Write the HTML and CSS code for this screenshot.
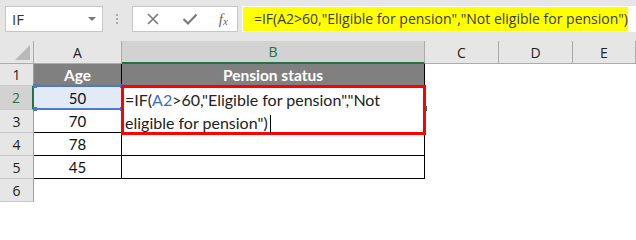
FILE: index.html
```html
<!DOCTYPE html>
<html>
<head>
<meta charset="utf-8">
<link rel="stylesheet" href="styles.css">
</head>
<body>
<div class="topbar">
  <div class="namebox"><span class="name">IF</span><span class="caret"></span></div>
  <div class="grip"><i></i><i></i><i></i></div>
  <div class="fbtns">
    <svg class="ico" width="14" height="14" viewBox="0 0 14 14"><path d="M2 2 L12 12 M12 2 L2 12" stroke="#7a7a7a" stroke-width="1.6" fill="none"/></svg>
    <svg class="ico" width="16" height="14" viewBox="0 0 16 14"><path d="M1.5 7 L6 11.5 L14.5 2.5" stroke="#7a7a7a" stroke-width="2.2" fill="none"/></svg>
    <span class="fx">f<sub>x</sub></span>
  </div>
  <div class="finput"><span class="hl">=IF(A2&gt;60,"Eligible for pension","Not eligible for pension")</span></div>
</div>
<div class="sheet">
  <div class="corner"><span class="tri"></span></div>
  <div class="ch">A</div>
  <div class="ch sel">B</div>
  <div class="ch">C</div>
  <div class="ch">D</div>
  <div class="ch">E</div>

  <div class="rh">1</div>
  <div class="c t head">Age</div>
  <div class="c t head">Pension status</div>
  <div class="c"></div><div class="c"></div><div class="c"></div>

  <div class="rh rsel">2</div>
  <div class="c t ref">50<i class="h h1"></i><i class="h h2"></i><i class="h h3"></i><i class="h h4"></i></div>
  <div class="c t editcell">
    <div class="editbox">=IF(<span class="refc">A2</span>&gt;60,"Eligible for pension","Not eligible for pension")<span class="cursor"></span></div>
    <i class="fill"></i>
  </div>
  <div class="c"></div><div class="c"></div><div class="c"></div>

  <div class="rh">3</div>
  <div class="c t">70</div>
  <div class="c t"></div>
  <div class="c"></div><div class="c"></div><div class="c"></div>

  <div class="rh">4</div>
  <div class="c t">78</div>
  <div class="c t"></div>
  <div class="c"></div><div class="c"></div><div class="c"></div>

  <div class="rh">5</div>
  <div class="c t">45</div>
  <div class="c t"></div>
  <div class="c"></div><div class="c"></div><div class="c"></div>

  <div class="rh">6</div>
  <div class="c"></div><div class="c"></div>
  <div class="c"></div><div class="c"></div><div class="c"></div>
</div>
</body>
</html>
```

FILE: styles.css
```css
* { box-sizing: border-box; }
html, body { margin: 0; padding: 0; background: #fff; overflow: hidden; }
body { width: 636px; height: 205px; font-family: "Open Sans", "Liberation Sans", sans-serif; }

.topbar {
  height: 41px;
  background: #e6e6e6;
  display: flex;
  align-items: flex-start;
  padding-top: 6px;
}
.namebox {
  margin-left: 5px;
  width: 101px;
  height: 26px;
  background: #fff;
  border: 1px solid #c6c6c6;
  display: flex;
  align-items: center;
  justify-content: space-between;
  padding: 0 6px 0 6px;
}
.name { font-size: 15px; color: #333; }
.caret {
  width: 0; height: 0;
  border-left: 4px solid transparent;
  border-right: 4px solid transparent;
  border-top: 4px solid #777;
}
.grip {
  width: 31px;
  height: 26px;
  display: flex;
  flex-direction: column;
  align-items: center;
  justify-content: center;
  gap: 2px;
}
.grip i { display: block; width: 2px; height: 2px; background: #a8a8a8; }
.fbtns {
  width: 109px;
  height: 26px;
  background: #fff;
  border: 1px solid #c6c6c6;
  display: flex;
  align-items: center;
  justify-content: space-between;
  padding: 0 9px 0 13px;
}
.fx { font-family: "Liberation Serif", serif; font-style: italic; font-size: 15px; color: #666; }
.fx sub { font-size: 11px; vertical-align: -1px; }
.finput {
  margin-left: 4px;
  flex: 1;
  height: 26px;
  background: #fff;
  padding: 1px 8px 1px 1px;
  display: flex;
}
.hl {
  flex: 1;
  background: #ffff00;
  font-size: 14px;
  color: #3a3a3a;
  padding-left: 11px;
  line-height: 24px;
  white-space: nowrap;
}

.sheet {
  display: grid;
  grid-template-columns: 34px 88px 303px 74px 74px 63px;
  grid-template-rows: 23px 22px 24px 23px 23px 23px 23px;
  font-family: "Lato", "Liberation Sans", sans-serif;
  font-size: 15px;
}
.corner {
  background: #e6e6e6;
  border-right: 1px solid #ababab;
  border-bottom: 1px solid #ababab;
  position: relative;
}
.tri {
  position: absolute;
  right: 3px; bottom: 3px;
  width: 0; height: 0;
  border-left: 15px solid transparent;
  border-bottom: 15px solid #b9b9b9;
}
.ch {
  background: #e6e6e6;
  border-right: 1px solid #ababab;
  border-bottom: 1px solid #ababab;
  display: flex; align-items: center; justify-content: center;
  color: #222;
  font-family: "Open Sans", sans-serif;
  font-size: 14px;
}
.ch.sel { background: #d2d2d2; color: #217346; border-bottom: 2px solid #217346; }
.rh {
  background: #e6e6e6;
  border-right: 1px solid #9e9e9e;
  border-bottom: 1px solid #c9c9c9;
  display: flex; align-items: center; justify-content: center;
  color: #222;
  font-family: "Open Sans", sans-serif;
  font-size: 14px;
}
.rh.rsel { background: #d2d2d2; color: #217346; border-right: 2px solid #217346; }
.c {
  display: flex; align-items: center; justify-content: center;
  color: #111;
  position: relative;
}
.t { border-right: 1px solid #000; border-bottom: 1px solid #000; }
.head { background: #808080; color: #fff; font-weight: bold; font-size: 15.5px; }
.ref {
  background: #e2eaf6;
  border-top: 2px solid #4a7ac8;
  border-bottom: 2px solid #4a7ac8;
  margin-top: -1px;
}
.h { position: absolute; width: 4px; height: 4px; background: #4a7ac8; }
.h1 { left: -1px; top: -3px; }
.h2 { right: -3px; top: -3px; }
.h3 { left: -1px; bottom: -3px; }
.h4 { right: -3px; bottom: -3px; }

.editbox {
  position: absolute;
  left: -1px; top: -1px;
  width: 305px; height: 50px;
  border: 3px solid #ff0000;
  background: #fff;
  z-index: 2;
  padding: 0 18px 0 1px;
  line-height: 23px;
  color: #222;
  text-align: left;
  font-size: 16px;
}
.refc { color: #3a6fc9; }
.cursor { display: inline-block; width: 1px; height: 18px; background: #000; vertical-align: -4px; margin-left: 2px; }
.fill { position: absolute; right: -3px; top: 20px; width: 2px; height: 5px; background: #217346; z-index: 3; }
```
